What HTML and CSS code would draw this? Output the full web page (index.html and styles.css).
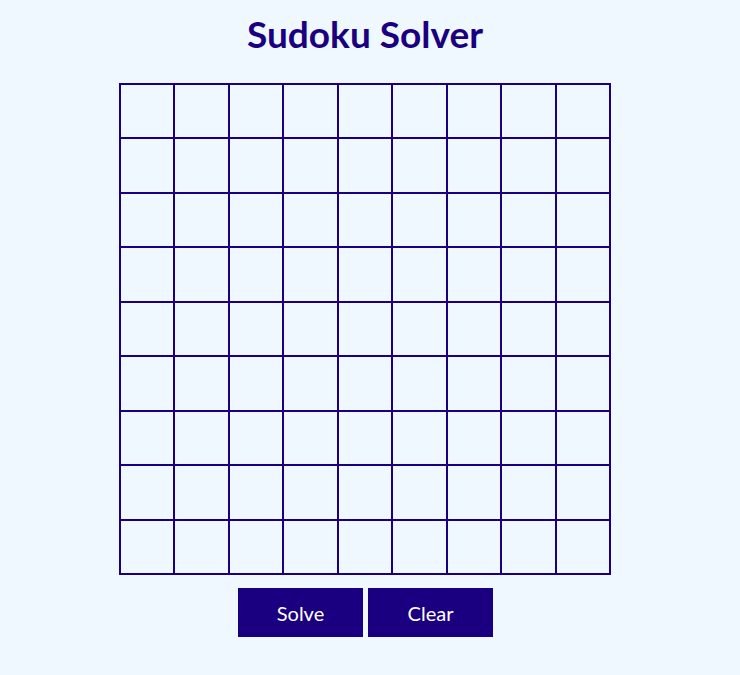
FILE: index.html
```html
<!DOCTYPE html>
<html lang="en">
<head>
    <meta charset="UTF-8">
    <meta name="viewport" content="width=device-width, initial-scale=1.0">
    <title>Sudoku Solver</title>
    <link rel="stylesheet" href="styles.css">
</head>
<body>
    <div class="container">
        <h1>Sudoku Solver</h1>

        <div class="board" id="board"></div>

        <div class="controls">
            <button onclick="solve()">Solve</button>
            <button onclick="clearBoard()">Clear</button>
        </div>
    </div>

    <script>
        const boardEl = document.getElementById("board");

        // build the 9x9 grid of inputs
        for (let i = 0; i < 81; i++) {
            const cell = document.createElement("input");
            cell.type = "text";
            cell.maxLength = 1;
            cell.className = "cell";
            boardEl.appendChild(cell);
        }

        function readBoard() {
            const cells = document.querySelectorAll(".cell");
            const grid = [];
            for (let r = 0; r < 9; r++) {
                grid.push([]);
                for (let c = 0; c < 9; c++) {
                    const v = parseInt(cells[r * 9 + c].value);
                    grid[r].push(isNaN(v) ? 0 : v);
                }
            }
            return grid;
        }

        function canPlace(grid, r, c, n) {
            for (let i = 0; i < 9; i++) {
                if (grid[r][i] === n || grid[i][c] === n) return false;
            }
            const br = r - r % 3, bc = c - c % 3;
            for (let i = 0; i < 3; i++) {
                for (let j = 0; j < 3; j++) {
                    if (grid[br + i][bc + j] === n) return false;
                }
            }
            return true;
        }

        function backtrack(grid) {
            for (let r = 0; r < 9; r++) {
                for (let c = 0; c < 9; c++) {
                    if (grid[r][c] !== 0) continue;
                    for (let n = 1; n <= 9; n++) {
                        if (canPlace(grid, r, c, n)) {
                            grid[r][c] = n;
                            if (backtrack(grid)) return true;
                            grid[r][c] = 0;
                        }
                    }
                    return false;
                }
            }
            return true;
        }

        function solve() {
            const grid = readBoard();
            if (!backtrack(grid)) {
                alert("No solution found");
                return;
            }
            const cells = document.querySelectorAll(".cell");
            cells.forEach((cell, i) => {
                cell.value = grid[Math.floor(i / 9)][i % 9];
            });
        }

        function clearBoard() {
            document.querySelectorAll(".cell").forEach(cell => cell.value = "");
        }
    </script>
</body>
</html>
```

FILE: styles.css
```css
body {
    margin: 0;
    background: #f0f8ff;
    font-family: Lato, "Open Sans", sans-serif;
}

.container {
    width: 730px;
    text-align: center;
}

h1 {
    margin: 0;
    padding-top: 12px;
    font-size: 37px;
    line-height: 44px;
    font-weight: bold;
    color: #1a0080;
}

.board {
    display: grid;
    grid-template-columns: repeat(9, 1fr);
    grid-template-rows: repeat(9, 1fr);
    gap: 2px;
    padding: 2px;
    width: 488px;
    height: 488px;
    margin: 27px auto 0;
    background: #1a0080;
}

.cell {
    width: 100%;
    height: 100%;
    box-sizing: border-box;
    border: none;
    background: #f0f8ff;
    font-size: 24px;
    text-align: center;
    color: #1a0080;
    outline: none;
    padding: 0;
}

.controls {
    display: flex;
    justify-content: center;
    gap: 5px;
    margin-top: 13px;
    padding-left: 1px;
}

.controls button {
    width: 125px;
    height: 49px;
    background: #1a0080;
    color: white;
    border: none;
    font-family: Lato, "Open Sans", sans-serif;
    font-size: 20px;
    cursor: pointer;
}

.controls button:hover {
    background: #2a10a0;
}
```
